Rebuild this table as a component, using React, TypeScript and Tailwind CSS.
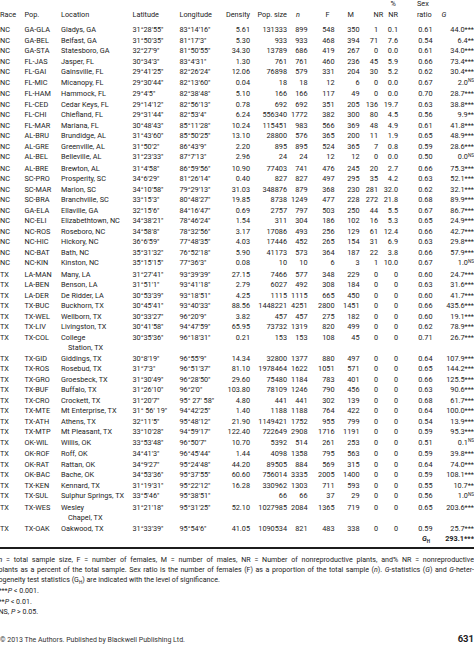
import React from 'react';

// pipe separated: race|pop|location|lat|lon|density|size|n|F|M|NR|%NR|sex|G|sig  ("~" = wrapped location)
const raw = `
NC|GA-GLA|Gladys, GA|31°28′55″|83°14′16″|5.61|131333|899|548|350|1|0.1|0.61|44.0|***
NC|GA-BEL|Belfast, GA|31°50′35″|81°17′3″|5.30|933|933|468|394|71|7.6|0.54|6.4|**
NC|GA-STA|Statesboro, GA|32°27′9″|81°50′55″|34.30|13789|686|419|267|0|0.0|0.61|34.0|***
NC|FL-JAS|Jasper, FL|30°34′3″|83°4′31″|1.30|761|761|460|236|45|5.9|0.66|73.4|***
NC|FL-GAI|Gainsville, FL|29°41′25″|82°26′24″|12.06|76898|579|331|204|30|5.2|0.62|30.4|***
NC|FL-MIC|Micanopy, FL|29°30′44″|82°13′60″|0.04|18|18|12|6|0|0.0|0.67|2.0|NS
NC|FL-HAM|Hammock, FL|29°4′5″|82°38′48″|5.10|166|166|117|49|0|0.0|0.70|28.7|***
NC|FL-CED|Cedar Keys, FL|29°14′12″|82°56′13″|0.78|692|692|351|205|136|19.7|0.63|38.8|***
NC|FL-CHI|Chiefland, FL|29°31′44″|82°53′4″|6.24|556340|1772|382|300|80|4.5|0.56|9.9|**
NC|FL-MAR|Mariana, FL|30°48′43″|85°11′28″|10.24|115451|983|566|369|48|4.9|0.61|41.8|***
NC|AL-BRU|Brundidge, AL|31°43′60″|85°50′25″|13.10|28800|576|365|200|11|1.9|0.65|48.9|***
NC|AL-GRE|Greenville, AL|31°50′2″|86°43′9″|2.20|895|895|524|365|7|0.8|0.59|28.6|***
NC|AL-BEL|Belleville, AL|31°23′33″|87°7′13″|2.96|24|24|12|12|0|0.0|0.50|0.0|NS
NC|AL-BRE|Brewton, AL|31°4′58″|86°59′56″|10.90|77403|741|476|245|20|2.7|0.66|75.3|***
NC|SC-PRO|Prosperity, SC|34°6′29″|81°26′14″|0.40|827|827|497|295|35|4.2|0.63|52.1|***
NC|SC-MAR|Marion, SC|34°10′58″|79°29′13″|31.03|348876|879|368|230|281|32.0|0.62|32.1|***
NC|SC-BRA|Branchville, SC|33°15′3″|80°48′27″|19.85|8738|1249|477|228|272|21.8|0.68|89.9|***
NC|GA-ELA|Ellaville, GA|32°15′6″|84°16′47″|0.69|2757|797|503|250|44|5.5|0.67|86.7|***
NC|NC-ELI|Elizabethtown, NC|34°38′21″|78°46′24″|1.54|311|304|186|102|16|5.3|0.65|24.9|***
NC|NC-ROS|Roseboro, NC|34°58′8″|78°32′56″|3.17|17086|493|256|129|61|12.4|0.66|42.7|***
NC|NC-HIC|Hickory, NC|36°6′59″|77°48′35″|4.03|17446|452|265|154|31|6.9|0.63|29.8|***
NC|NC-BAT|Bath, NC|35°31′32″|76°52′18″|5.90|41173|573|364|187|22|3.8|0.66|57.9|***
NC|NC-KIN|Kinston, NC|35°15′15″|77°36′3″|0.08|10|10|6|3|1|10.0|0.67|1.0|NS
TX|LA-MAN|Many, LA|31°27′41″|93°39′39″|27.15|7466|577|348|229|0|0|0.60|24.7|***
TX|LA-BEN|Benson, LA|31°51′1″|93°41′18″|2.79|6027|492|308|184|0|0|0.63|31.6|***
TX|LA-DER|De Ridder, LA|30°53′39″|93°18′51″|4.25|1115|1115|665|450|0|0|0.60|41.7|***
TX|TX-BUC|Buckhorn, TX|30°45′41″|93°40′33″|88.56|1448221|4251|2800|1451|0|0|0.66|435.6|***
TX|TX-WEL|Wellborn, TX|30°33′27″|96°20′9″|3.82|457|457|275|182|0|0|0.60|19.1|***
TX|TX-LIV|Livingston, TX|30°41′58″|94°47′59″|65.95|73732|1319|820|499|0|0|0.62|78.9|***
TX|TX-COL|College~Station, TX|30°35′36″|96°18′31″|0.21|153|153|108|45|0|0|0.71|26.7|***
TX|TX-GID|Giddings, TX|30°8′19″|96°55′9″|14.34|32800|1377|880|497|0|0|0.64|107.9|***
TX|TX-ROS|Rosebud, TX|31°7′3″|96°51′37″|81.10|1978464|1622|1051|571|0|0|0.65|144.2|***
TX|TX-GRO|Groesbeck, TX|31°30′49″|96°28′50″|29.60|75480|1184|783|401|0|0|0.66|125.5|***
TX|TX-BUF|Buffalo, TX|31°26′10″|96°2′0″|103.80|78109|1246|790|456|0|0|0.63|90.6|***
TX|TX-CRO|Crockett, TX|31°20′7″|95° 27′ 58″|4.80|441|441|302|139|0|0|0.68|61.7|***
TX|TX-MTE|Mt Enterprise, TX|31° 56′ 19″|94°42′25″|1.40|1188|1188|764|422|0|0|0.64|100.0|***
TX|TX-ATH|Athens, TX|32°11′5″|95°48′12″|21.90|1149421|1752|955|799|0|0|0.54|13.9|***
TX|TX-MTP|Mt Pleasant, TX|33°10′28″|94°59′17″|122.40|722649|2908|1716|1191|0|0|0.59|95.3|***
TX|OK-WIL|Willis, OK|33°53′48″|96°50′7″|10.70|5392|514|261|253|0|0|0.51|0.1|NS
TX|OK-ROF|Roff, OK|34°41′3″|96°45′44″|1.44|4098|1358|795|563|0|0|0.59|39.8|***
TX|OK-RAT|Rattan, OK|34°9′27″|95°24′48″|44.20|89505|884|569|315|0|0|0.64|74.0|***
TX|OK-BAC|Bache, OK|34°53′36″|95°37′55″|60.60|756014|3335|2005|1400|0|0|0.59|108.1|***
TX|TX-KEN|Kennard, TX|31°19′31″|95°22′12″|16.28|330962|1303|711|593|0|0|0.55|10.7|**
TX|TX-SUL|Sulphur Springs, TX|33°5′46″|95°38′51″||66|66|37|29|0|0|0.56|1.0|NS
TX|TX-WES|Wesley~Chapel, TX|31°21′18″|95°31′25″|52.10|1027985|2084|1365|719|0|0|0.65|203.6|***
TX|TX-OAK|Oakwood, TX|31°33′39″|95°54′6″|41.05|1090534|821|483|338|0|0|0.59|25.7|***
`;

const rows = raw.trim().split('\n').map((l) => l.split('|'));

const cols =
  'grid grid-cols-[24.5px_36.5px_71.5px_47px_42.5px_28px_37px_20.5px_27px_25px_18.5px_20px_34.5px_41.5px] whitespace-nowrap';

function Sig({ s }: { s: string }) {
  if (s === 'NS')
    return <span className="relative -top-[2.5px] text-[4.6px]">NS</span>;
  return <span>{s}</span>;
}

function DataRow({ r }: { r: string[] }) {
  const [race, pop, loc, lat, lon, dens, size, n, f, m, nr, pnr, sex, g, sig] = r;
  const [l1, l2] = loc.split('~');
  return (
    <div className={cols}>
      <div>{race}</div>
      <div>{pop}</div>
      <div>
        {l1}
        {l2 && <div className="pl-[7px]">{l2}</div>}
      </div>
      <div>{lat}</div>
      <div>{lon}</div>
      <div className="text-right">{dens}</div>
      <div className="text-right">{size}</div>
      <div className="text-right">{n}</div>
      <div className="text-right">{f}</div>
      <div className="text-right">{m}</div>
      <div className="text-right">{nr}</div>
      <div className="text-right">{pnr}</div>
      <div className="text-right">{sex}</div>
      <div className="text-right">
        {g}
        <Sig s={sig} />
      </div>
    </div>
  );
}

export default function App() {
  return (
    <div className="w-[474px] h-[650px] overflow-hidden bg-white text-[#1c1c1c] text-[7.3px] leading-[10.5px] font-['Roboto',sans-serif]">
      <div className={`${cols} items-end -mt-[1px]`}>
        <div>Race</div>
        <div>Pop.</div>
        <div>Location</div>
        <div>Latitude</div>
        <div>Longitude</div>
        <div className="text-right">Density</div>
        <div className="text-right">Pop. size</div>
        <div className="pl-[9px] italic">n</div>
        <div className="pl-[18px]">F</div>
        <div className="pl-[13px]">M</div>
        <div className="pl-[14px]">NR</div>
        <div className="flex flex-col items-end">
          <div className="flex flex-col items-center">
            <span>%</span>
            <span>NR</span>
          </div>
        </div>
        <div className="flex flex-col pl-[19px]">
          <span>Sex</span>
          <span>ratio</span>
        </div>
        <div className="pl-[9px] italic">G</div>
      </div>

      <div className="mt-[5px]">
        {rows.map((r) => (
          <DataRow key={r[1]} r={r} />
        ))}
        <div className={`${cols} font-bold`}>
          <div className="col-start-13 pr-[2.5px] text-right">
            <span className="italic">G</span>
            <span className="relative top-[1.5px] text-[4.6px]">H</span>
          </div>
          <div className="text-right">293.1***</div>
        </div>
      </div>

      <div className="mt-[1px] h-[2px] bg-[#1c1c1c]" />

      <div className="mt-[6px] -ml-[1.5px] w-[475.5px] text-[7.1px] leading-[10.3px]">
        <div className="whitespace-nowrap text-justify [text-align-last:justify]">
          <i>n</i> = total sample size, F = number of females, M = number of males, NR = Number of
          nonreproductive plants, and% NR = nonreproductive
        </div>
        <div className="whitespace-nowrap text-justify [text-align-last:justify]">
          plants as a percent of the total sample. Sex ratio is the number of females (F) as a
          proportion of the total sample (<i>n</i>). <i>G</i>-statistics (<i>G</i>) and <i>G</i>-heter-
        </div>
        <div>
          ogeneity test statistics (G<span className="relative top-[1.5px] text-[4.6px]">H</span>) are
          indicated with the level of significance.
        </div>
        <div>
          ***<i>P</i> &lt; 0.001.
        </div>
        <div>
          **<i>P</i> &lt; 0.01.
        </div>
        <div>
          NS, <i>P</i> &gt; 0.05.
        </div>
      </div>

      <div className="mt-[17px] flex items-baseline justify-between">
        <span className="text-[7px] text-[#333]">© 2013 The Authors. Published by Blackwell Publishing Ltd.</span>
        <span className="text-[9.5px] font-bold">631</span>
      </div>
    </div>
  );
}
